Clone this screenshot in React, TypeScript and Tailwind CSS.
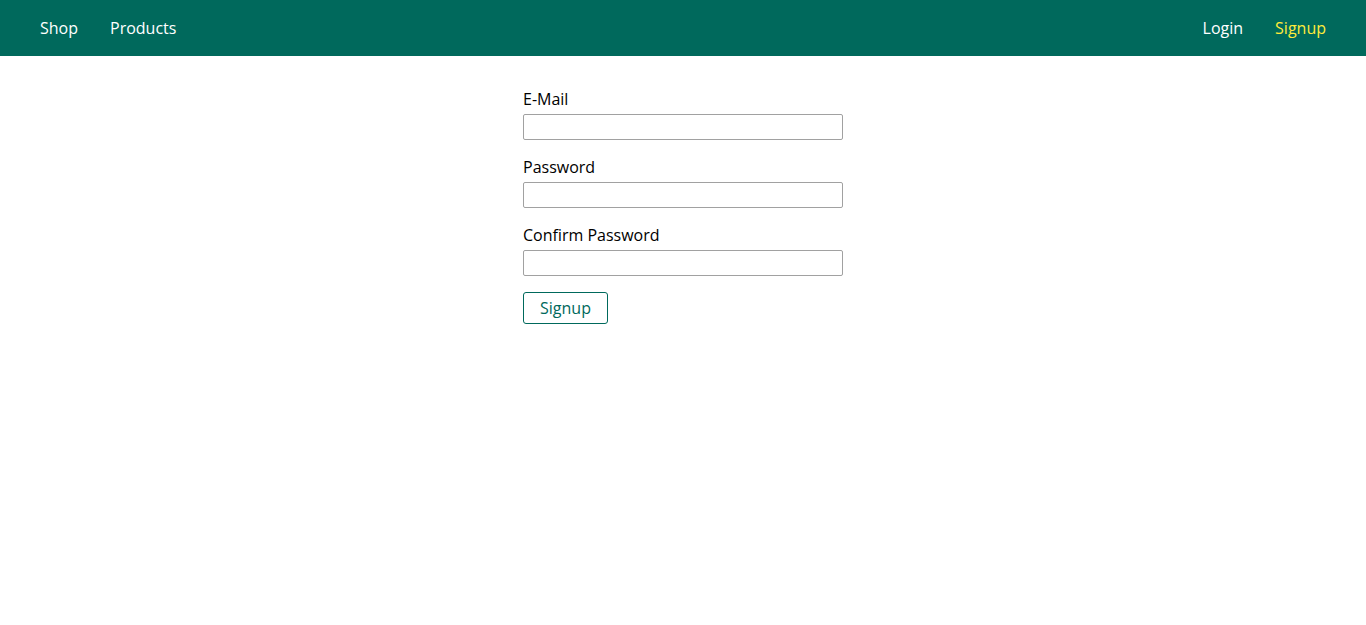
import React from 'react';

const App: React.FC = () => {
  return (
    <div className="min-h-screen bg-white font-['Open_Sans',sans-serif] text-black">
      <header className="flex h-14 w-full items-center bg-[#00695c] px-6">
        <nav className="flex h-full w-full items-center">
          <ul className="flex h-full items-center">
            <li className="mx-4">
              <a href="#" className="text-white">Shop</a>
            </li>
            <li className="mx-4">
              <a href="#" className="text-white">Products</a>
            </li>
          </ul>
          <ul className="ml-auto flex h-full items-center">
            <li className="mx-4">
              <a href="#" className="text-white">Login</a>
            </li>
            <li className="mx-4">
              <a href="#" className="text-[#ffeb3b]">Signup</a>
            </li>
          </ul>
        </nav>
      </header>

      <main className="p-4">
        <form className="mx-auto w-80 max-w-[90%]">
          <div className="my-4">
            <label htmlFor="email" className="mb-1 block h-[22px] w-full leading-[22px]">E-Mail</label>
            <input
              type="email"
              id="email"
              className="block h-[26px] w-full rounded-[2px] border border-[#a1a1a1] px-0.5"
            />
          </div>
          <div className="my-4">
            <label htmlFor="password" className="mb-1 block h-[22px] w-full leading-[22px]">Password</label>
            <input
              type="password"
              id="password"
              className="block h-[26px] w-full rounded-[2px] border border-[#a1a1a1] px-0.5"
            />
          </div>
          <div className="my-4">
            <label htmlFor="confirmPassword" className="mb-1 block h-[22px] w-full leading-[22px]">Confirm Password</label>
            <input
              type="password"
              id="confirmPassword"
              className="block h-[26px] w-full rounded-[2px] border border-[#a1a1a1] px-0.5"
            />
          </div>
          <button
            type="submit"
            className="h-8 rounded-[3px] border border-[#00695c] bg-white px-4 leading-[22px] text-[#00695c]"
          >
            Signup
          </button>
        </form>
      </main>
    </div>
  );
};

export default App;
